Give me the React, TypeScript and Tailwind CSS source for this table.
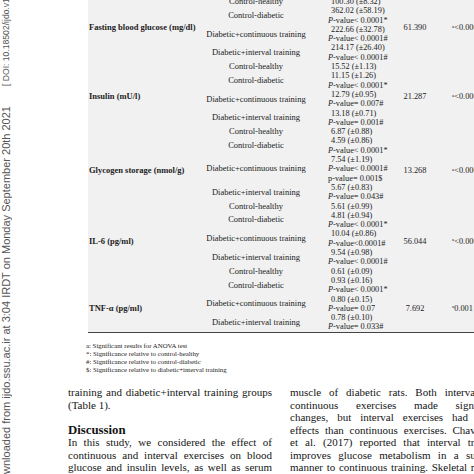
const blocks = [
  {
    name: "Fasting blood glucose (mg/dl)",
    f: "61.390",
    p: "<0.0001",
    pad: "pt-[26px]",
    rows: [
      ["Control-healthy", "100.30 (±8.32)"],
      ["Control-diabetic", "362.02 (±58.19)", "P-value< 0.0001*"],
      ["Diabetic+continuous training", "222.66 (±32.78)", "P-value< 0.0001#"],
      ["Diabetic+interval training", "214.17 (±26.40)", "P-value< 0.0001#"],
    ],
  },
  {
    name: "Insulin (mU/l)",
    f: "21.287",
    p: "<0.0001",
    pad: "pt-[30px]",
    rows: [
      ["Control-healthy", "15.52 (±1.13)"],
      ["Control-diabetic", "11.15 (±1.26)", "P-value< 0.0001*"],
      ["Diabetic+continuous training", "12.79 (±0.95)", "P-value= 0.007#"],
      ["Diabetic+interval training", "13.18 (±0.71)", "P-value= 0.001#"],
    ],
  },
  {
    name: "Glycogen storage (nmol/g)",
    f: "13.268",
    p: "<0.0001",
    pad: "pt-[39px]",
    rows: [
      ["Control-healthy", "6.87 (±0.88)"],
      ["Control-diabetic", "4.59 (±0.86)", "P-value< 0.0001*"],
      ["Diabetic+continuous training", "7.54 (±1.19)", "P-value< 0.0001#", "p-value= 0.001$"],
      ["Diabetic+interval training", "5.67 (±0.83)", "P-value= 0.043#"],
    ],
  },
  {
    name: "IL-6 (pg/ml)",
    f: "56.044",
    p: "<0.0001",
    pad: "pt-[35px]",
    rows: [
      ["Control-healthy", "5.61 (±0.99)"],
      ["Control-diabetic", "4.81 (±0.94)", "P-value< 0.0001*"],
      ["Diabetic+continuous training", "10.04 (±0.86)", "P-value<0.0001#"],
      ["Diabetic+interval training", "9.54 (±0.98)", "P-value< 0.0001#"],
    ],
  },
  {
    name: "TNF-α (pg/ml)",
    f: "7.692",
    p: "0.001",
    pad: "pt-[37px]",
    rows: [
      ["Control-healthy", "0.61 (±0.09)"],
      ["Control-diabetic", "0.93 (±0.16)", "P-value< 0.0001*"],
      ["Diabetic+continuous training", "0.80 (±0.15)", "P-value= 0.07"],
      ["Diabetic+interval training", "0.78 (±0.10)", "P-value= 0.033#"],
    ],
  },
];

const notes = [
  "a: Significant results for ANOVA test",
  "*: Significance relative to control-healthy",
  "#: Significance relative to control-diabetic",
  "$: Significance relative to diabetic+interval training",
];

const leftLines = [
  "training and diabetic+interval training groups",
  "(Table 1).",
  "",
  "Discussion",
  "In this study, we considered the effect of",
  "continuous and interval exercises on blood",
  "glucose and insulin levels, as well as serum",
];

const rightLines = [
  "muscle of diabetic rats. Both interval and",
  "continuous exercises made significant",
  "changes, but interval exercises had better",
  "effects than continuous exercises. Chavanelle",
  "et al. (2017) reported that interval training",
  "improves glucose metabolism in a superior",
  "manner to continuous training. Skeletal muscle",
];

const ValueLine = ({ text }: { text: string }) => {
  if (text.startsWith("P-value")) {
    return (
      <div className="whitespace-nowrap">
        <i>P</i>
        {text.slice(1)}
      </div>
    );
  }
  if (text.startsWith("p-value")) {
    return <div className="whitespace-nowrap">{text}</div>;
  }
  return <div className="whitespace-nowrap pl-[3px]">{text}</div>;
};

const BodyLine = ({ text, last }: { text: string; last?: boolean }) => {
  if (!text) return <div className="h-[12.5px]" />;
  if (text === "Discussion") {
    return <div className="h-[12.5px] text-[12.8px] font-bold leading-[12.5px]">{text}</div>;
  }
  return (
    <div
      className={`h-[12.5px] whitespace-nowrap ${last ? "" : "text-justify [text-align-last:justify]"}`}
    >
      {text}
    </div>
  );
};

export default function App() {
  return (
    <div className="flex h-[474px] w-[474px] overflow-hidden bg-white font-['Liberation_Serif',serif] text-[#151515]">
      {/* download stamp in the margin */}
      <div className="h-[474px] w-[12px] shrink-0 overflow-hidden">
        <div className="mt-[-14px] h-[502px] w-[12px] rotate-180 whitespace-nowrap font-['Liberation_Sans',sans-serif] text-[11px] leading-[12px] text-[#555] [writing-mode:vertical-rl]">
          <span>Downloaded from ijdo.ssu.ac.ir at 3:04 IRDT on Monday September 20th 2021</span>
          <span className="ms-[20px] text-[8.6px]">[ DOI: 10.18502/ijdo.v13i3.7187 ]</span>
        </div>
      </div>

      <div className="ml-[56px] w-[440px] shrink-0">
        {/* table */}
        <div className="ml-[20px] mt-[-3px] w-[420px] border-b border-[#444] bg-[#f1f1f1] text-[#222]">
          {blocks.map((b) => (
            <div key={b.name} className="flex">
              <div className={`w-[110px] shrink-0 pl-[1px] ${b.pad}`}>
                <div className="h-[9.3px] whitespace-nowrap text-[8.5px] font-bold leading-[9.3px]">{b.name}</div>
              </div>
              <div className="w-[197px] shrink-0">
                {b.rows.map((r) => (
                  <div key={r[0]} className="flex">
                    <div className="flex w-[116px] shrink-0 items-center justify-center whitespace-nowrap text-[8.5px] leading-[9.3px]">
                      {r[0]}
                    </div>
                    <div className="w-[81px] shrink-0 pl-[14px] text-[8.3px] leading-[9.3px]">
                      {r.slice(1).map((v) => (
                        <ValueLine key={v} text={v} />
                      ))}
                    </div>
                  </div>
                ))}
              </div>
              <div className={`w-[40px] shrink-0 ${b.pad}`}>
                <div className="h-[9.3px] text-center text-[8.3px] leading-[9.3px]">{b.f}</div>
              </div>
              <div className={`w-[60px] shrink-0 pl-[17px] ${b.pad}`}>
                <div className="h-[9.3px] whitespace-nowrap text-[8.3px] leading-[9.3px]">
                  <sup className="text-[5px]">a</sup>
                  {b.p}
                </div>
              </div>
            </div>
          ))}
        </div>

        {/* footnotes */}
        <div className="ml-[18px] mt-[9px] text-[6.8px] leading-[8.1px] text-[#222]">
          {notes.map((n) => (
            <div key={n} className="whitespace-nowrap">
              {n}
            </div>
          ))}
        </div>

        {/* two column body text */}
        <div className="mt-[12px] flex gap-[18px] text-[11px] leading-[12.5px]">
          <div className="w-[204px] shrink-0">
            {leftLines.map((t, i) => (
              <BodyLine key={i} text={t} last={i === 1} />
            ))}
          </div>
          <div className="w-[212px] shrink-0">
            {rightLines.map((t, i) => (
              <BodyLine key={i} text={t} />
            ))}
          </div>
        </div>
      </div>
    </div>
  );
}
